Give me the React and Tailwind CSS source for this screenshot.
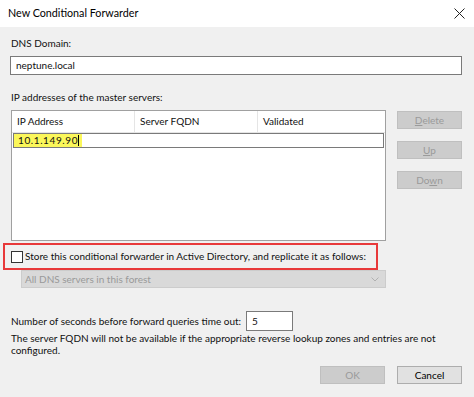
export default function App() {
  return (
    <div className="w-[474px] h-[397px] bg-[#f0f0f0] font-['Segoe_UI','Lato',sans-serif] text-[10px] text-[#111] overflow-hidden flex flex-col">
      {/* title bar */}
      <div className="h-[27px] bg-white flex items-center justify-between pl-[8px] pr-[9px] shrink-0">
        <span className="text-[10.75px] text-black">New Conditional Forwarder</span>
        <svg width="11" height="11" viewBox="0 0 11 11" className="stroke-[#222]">
          <path d="M0.5 0.5 L10.5 10.5 M10.5 0.5 L0.5 10.5" strokeWidth="1" />
        </svg>
      </div>

      <div className="flex flex-col pl-[10px] pr-[12px]">
        <div className="mt-[8px] h-[16px] leading-[16px] pl-[1px]">DNS Domain:</div>
        <div className="mt-[5px] h-[19px] bg-white border border-[#7a7a7a] flex items-center pl-[5px]">neptune.local</div>
        <div className="mt-[14px] h-[16px] leading-[16px] pl-[1px]">IP addresses of the master servers:</div>

        <div className="mt-[5px] flex gap-[11px]">
          <div className="w-[376px] h-[131px] ml-[1px] bg-white border border-[#a0a0a0] flex flex-col">
            <div className="h-[22px] flex items-center border-b border-[#e5e5e5]">
              <div className="w-[123px] h-full flex items-center pl-[5px] border-r border-[#e5e5e5]">IP Address</div>
              <div className="w-[123px] h-full flex items-center pl-[5px] border-r border-[#e5e5e5]">Server FQDN</div>
              <div className="flex-1 h-full flex items-center pl-[5px]">Validated</div>
            </div>
            <div className="h-[15px] mx-[1px] border border-[#7a7a7a] flex items-center">
              <div className="h-full bg-[#fbf75a] flex items-center pl-[4px] pr-[2px] w-[68px]">
                <span className="tracking-[0.6px]">10.1.149.90</span>
                <span className="w-px h-[11px] bg-black" />
              </div>
            </div>
          </div>
          <div className="flex flex-col gap-[12px] pt-[1px]">
            <button className="w-[65px] h-[18px] bg-[#cccccc] border border-[#bfbfbf] text-[#9a9a9a] text-[10px]"><u>D</u>elete</button>
            <button className="w-[65px] h-[18px] bg-[#cccccc] border border-[#bfbfbf] text-[#9a9a9a] text-[10px]"><u>U</u>p</button>
            <button className="w-[65px] h-[18px] bg-[#cccccc] border border-[#bfbfbf] text-[#9a9a9a] text-[10px]">Do<u>w</u>n</button>
          </div>
        </div>
      </div>

      {/* highlighted checkbox row */}
      <div className="mt-[2px] ml-[3px] w-[375px] h-[27px] border-[2px] border-[#e8393a] flex items-center pl-[6px] gap-[2px]">
        <div className="w-[12px] h-[12px] shrink-0 bg-white border border-[#333]" />
        <span className="whitespace-nowrap">Store this conditional forwarder in Active Directory, and replicate it as follows:</span>
      </div>

      <div className="ml-[21px] w-[365px] h-[18px] bg-[#d9d9d9] border border-[#cccccc] flex items-center justify-between pl-[3px] pr-[6px] text-[#9a9a9a]">
        <span>All DNS servers in this forest</span>
        <svg width="8" height="5" viewBox="0 0 8 5" className="stroke-[#b0b0b0]" fill="none">
          <path d="M0.5 0.5 L4 4 L7.5 0.5" strokeWidth="1" />
        </svg>
      </div>

      <div className="mt-[23px] pl-[11px] flex items-center">
        <span className="w-[235px] whitespace-nowrap">Number of seconds before forward queries time out:</span>
        <div className="w-[47px] h-[20px] bg-white border border-[#7a7a7a] flex items-center pl-[5px]">5</div>
      </div>
      <div className="pl-[11px] pr-[30px] mt-[1px] leading-[12px]">
        The server FQDN will not be available if the appropriate reverse lookup zones and entries are not configured.
      </div>

      <div className="mt-[10px] flex justify-end gap-[12px] pr-[12px]">
        <button className="w-[65px] h-[18px] bg-[#cccccc] border border-[#bfbfbf] text-[#9a9a9a] text-[10px]">OK</button>
        <button className="w-[65px] h-[18px] bg-[#e1e1e1] border border-[#adadad] text-black text-[10px]">Cancel</button>
      </div>
    </div>
  )
}
